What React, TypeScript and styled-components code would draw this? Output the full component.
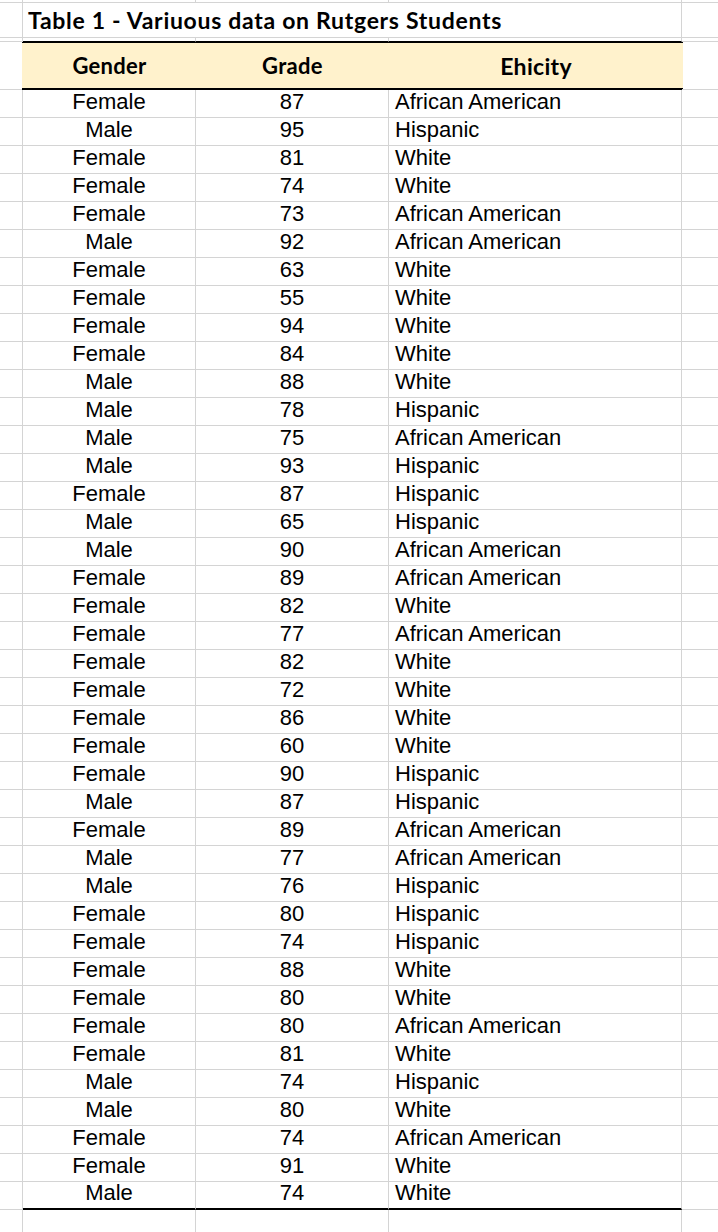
import styled, { createGlobalStyle } from "styled-components";

const GlobalStyle = createGlobalStyle`
  html, body {
    margin: 0;
    padding: 0;
    background: #ffffff;
  }
  body {
    overflow: hidden;
    font-family: "Liberation Sans", Arial, sans-serif;
    color: #000000;
  }
`;

const grid = "#d4d4d4";
const fill = "#fff2cc";

type Student = [string, number, string];

const students: Student[] = [
  ["Female", 87, "African American"],
  ["Male", 95, "Hispanic"],
  ["Female", 81, "White"],
  ["Female", 74, "White"],
  ["Female", 73, "African American"],
  ["Male", 92, "African American"],
  ["Female", 63, "White"],
  ["Female", 55, "White"],
  ["Female", 94, "White"],
  ["Female", 84, "White"],
  ["Male", 88, "White"],
  ["Male", 78, "Hispanic"],
  ["Male", 75, "African American"],
  ["Male", 93, "Hispanic"],
  ["Female", 87, "Hispanic"],
  ["Male", 65, "Hispanic"],
  ["Male", 90, "African American"],
  ["Female", 89, "African American"],
  ["Female", 82, "White"],
  ["Female", 77, "African American"],
  ["Female", 82, "White"],
  ["Female", 72, "White"],
  ["Female", 86, "White"],
  ["Female", 60, "White"],
  ["Female", 90, "Hispanic"],
  ["Male", 87, "Hispanic"],
  ["Female", 89, "African American"],
  ["Male", 77, "African American"],
  ["Male", 76, "Hispanic"],
  ["Female", 80, "Hispanic"],
  ["Female", 74, "Hispanic"],
  ["Female", 88, "White"],
  ["Female", 80, "White"],
  ["Female", 80, "African American"],
  ["Female", 81, "White"],
  ["Male", 74, "Hispanic"],
  ["Male", 80, "White"],
  ["Female", 74, "African American"],
  ["Female", 91, "White"],
  ["Male", 74, "White"],
];

const Sheet = styled.div`
  width: 718px;
  height: 1232px;
  overflow: hidden;
  display: flex;
  flex-direction: column;
`;

const Row = styled.div<{ $h: number }>`
  display: grid;
  grid-template-columns: 23px 173px 193px 293px 1fr;
  height: ${(p) => p.$h}px;
  flex: none;
`;

// one spreadsheet cell, gridlines drawn on its right and bottom edge
const Cell = styled.div<{
  $bottom?: string;
  $align?: "left" | "center";
}>`
  box-sizing: border-box;
  border-right: 1px solid ${grid};
  border-bottom: ${(p) => p.$bottom ?? `1px solid ${grid}`};
  display: flex;
  align-items: flex-end;
  justify-content: ${(p) => (p.$align === "left" ? "flex-start" : "center")};
  padding-left: ${(p) => (p.$align === "left" ? "6px" : "0")};
  padding-bottom: 4px;
  font-size: 22px;
  line-height: 22px;
  white-space: nowrap;
`;

const TitleCell = styled.div`
  grid-column: 2 / 5;
  box-sizing: border-box;
  border-right: 1px solid ${grid};
  border-bottom: 1px solid ${grid};
  display: flex;
  align-items: flex-end;
  padding: 0 0 6px 5px;
  font-family: Lato, "Liberation Sans", sans-serif;
  font-weight: 700;
  font-size: 23px;
  letter-spacing: 0.7px;
  line-height: 22px;
  white-space: nowrap;
`;

const EdgeCell = styled.div`
  box-sizing: border-box;
  border-bottom: 1px solid ${grid};
`;

const HeaderBand = styled.div`
  grid-column: 2 / 5;
  display: grid;
  grid-template-columns: 173px 193px 1fr;
  background: ${fill};
  border-top: 1px solid #000;
  border-bottom: 2px solid #000;
  margin-left: -1px;
  margin-right: -1px;
  padding-left: 1px;
`;

const HeaderLabel = styled.div<{ $size: number }>`
  display: flex;
  align-items: flex-end;
  justify-content: center;
  padding-bottom: 11px;
  font-family: Lato, "Liberation Sans", sans-serif;
  font-weight: 700;
  font-size: ${(p) => p.$size}px;
  letter-spacing: 0.3px;
  line-height: 22px;
`;

const BlankCell = styled.div<{ $bottom?: string }>`
  box-sizing: border-box;
  border-right: 1px solid ${grid};
  border-bottom: ${(p) => p.$bottom ?? `1px solid ${grid}`};
`;

const LastCell = styled.div<{ $bottom?: boolean }>`
  box-sizing: border-box;
  border-bottom: ${(p) => (p.$bottom === false ? "none" : `1px solid ${grid}`)};
`;

const black1 = "1px solid #000";
const black2 = "2px solid #000";

export default function App() {
  return (
    <>
      <GlobalStyle />
      <Sheet>
        <Row $h={3}>
          <BlankCell />
          <BlankCell />
          <BlankCell />
          <BlankCell />
          <LastCell />
        </Row>
        <Row $h={35}>
          <BlankCell />
          <TitleCell>Table 1 - Variuous data on Rutgers Students</TitleCell>
          <LastCell />
        </Row>
        <Row $h={4}>
          <BlankCell />
          <BlankCell $bottom={black1} />
          <BlankCell $bottom={black1} />
          <BlankCell $bottom={black1} />
          <LastCell />
        </Row>
        <Row $h={48}>
          <EdgeCell />
          <HeaderBand>
            <HeaderLabel $size={22}>Gender</HeaderLabel>
            <HeaderLabel $size={22}>Grade</HeaderLabel>
            <HeaderLabel $size={23}>Ehicity</HeaderLabel>
          </HeaderBand>
          <LastCell />
        </Row>
        {students.map(([gender, grade, ethnicity], i) => {
          const bottom = i === students.length - 1 ? black2 : undefined;
          return (
            <Row $h={28} key={i}>
              <BlankCell />
              <Cell $bottom={bottom}>{gender}</Cell>
              <Cell $bottom={bottom}>{grade}</Cell>
              <Cell $bottom={bottom} $align="left">
                {ethnicity}
              </Cell>
              <LastCell />
            </Row>
          );
        })}
        <Row $h={40}>
          <BlankCell $bottom="none" />
          <BlankCell $bottom="none" />
          <BlankCell $bottom="none" />
          <BlankCell $bottom="none" />
          <LastCell $bottom={false} />
        </Row>
      </Sheet>
    </>
  );
}
